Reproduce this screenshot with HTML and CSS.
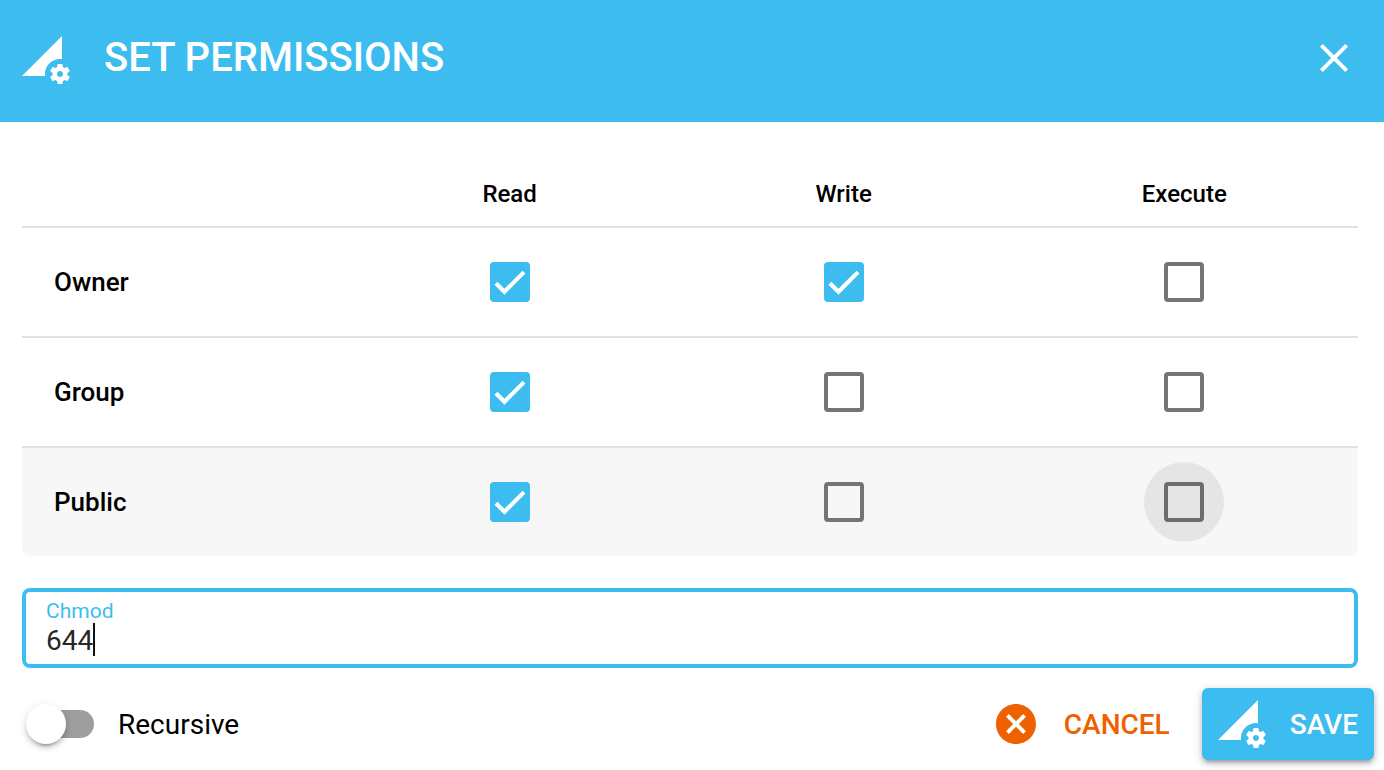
FILE: index.html
```
<!DOCTYPE html>
<html lang="en">
  <head>
    <meta charset="utf-8">
    <title>Set permissions</title>
    <meta name="viewport" content="width=device-width, initial-scale=1">
    <link rel="stylesheet" href="styles.css">
  </head>
  <body>
    <!-- Shared icon -->
    <svg class="sprite" aria-hidden="true">
      <symbol id="icon-permissions" viewBox="0 0 24 24">
        <path d="M18.99 11.5c.34 0 .67.03 1 .07L20 0 0 20h11.56c-.04-.33-.07-.66-.07-1 0-4.14 3.36-7.5 7.5-7.5zm3.71 7.99c.02-.16.04-.32.04-.49 0-.17-.01-.33-.04-.49l1.06-.83c.09-.08.12-.21.06-.32l-1-1.73c-.06-.11-.19-.15-.31-.11l-1.24.5c-.26-.2-.54-.37-.85-.49l-.19-1.32c-.01-.12-.12-.21-.24-.21h-2c-.12 0-.23.09-.25.21l-.19 1.32c-.3.13-.59.29-.85.49l-1.24-.5c-.11-.04-.24 0-.31.11l-1 1.73c-.06.11-.04.24.06.32l1.06.83c-.02.16-.03.32-.03.49 0 .17.01.33.03.49l-1.06.83c-.09.08-.12.21-.06.32l1 1.73c.06.11.19.15.31.11l1.24-.5c.26.2.54.37.85.49l.19 1.32c.02.12.12.21.25.21h2c.12 0 .23-.09.25-.21l.19-1.32c.3-.13.59-.29.84-.49l1.25.5c.11.04.24 0 .31-.11l1-1.73c.06-.11.03-.24-.06-.32l-1.07-.83zm-3.71 1.01c-.83 0-1.5-.67-1.5-1.5s.67-1.5 1.5-1.5 1.5.67 1.5 1.5-.67 1.5-1.5 1.5z"/>
      </symbol>
    </svg>

    <form class="dialog">
      <header class="dialog-header">
        <div class="dialog-title">
          <svg class="icon" aria-hidden="true"><use href="#icon-permissions"/></svg>
          <h1>Set permissions</h1>
        </div>
        <button type="button" class="close" aria-label="Close">
          <svg class="icon" viewBox="0 0 24 24" aria-hidden="true"><path d="M19 6.41L17.59 5 12 10.59 6.41 5 5 6.41 10.59 12 5 17.59 6.41 19 12 13.41 17.59 19 19 17.59 13.41 12z"/></svg>
        </button>
      </header>

      <div class="dialog-body">
        <table class="permissions">
          <colgroup>
            <col class="col-who">
            <col class="col-read">
            <col class="col-write">
            <col class="col-execute">
          </colgroup>
          <thead>
            <tr>
              <td></td>
              <th scope="col">Read</th>
              <th scope="col">Write</th>
              <th scope="col">Execute</th>
            </tr>
          </thead>
          <tbody>
            <tr>
              <th scope="row">Owner</th>
              <td><input type="checkbox" class="checkbox" aria-label="Owner read" checked></td>
              <td><input type="checkbox" class="checkbox" aria-label="Owner write" checked></td>
              <td><input type="checkbox" class="checkbox" aria-label="Owner execute"></td>
            </tr>
            <tr>
              <th scope="row">Group</th>
              <td><input type="checkbox" class="checkbox" aria-label="Group read" checked></td>
              <td><input type="checkbox" class="checkbox" aria-label="Group write"></td>
              <td><input type="checkbox" class="checkbox" aria-label="Group execute"></td>
            </tr>
            <tr class="active">
              <th scope="row">Public</th>
              <td><input type="checkbox" class="checkbox" aria-label="Public read" checked></td>
              <td><input type="checkbox" class="checkbox" aria-label="Public write"></td>
              <td><input type="checkbox" class="checkbox active" aria-label="Public execute"></td>
            </tr>
          </tbody>
        </table>

        <div class="field">
          <label for="chmod">Chmod</label>
          <input type="text" id="chmod" value="644">
          <span class="caret"></span>
        </div>
      </div>

      <footer class="dialog-actions">
        <label class="toggle">
          <input type="checkbox">
          <span>Recursive</span>
        </label>
        <div class="buttons">
          <button type="button" class="btn btn-cancel">
            <svg class="icon" viewBox="0 0 24 24" aria-hidden="true"><path d="M12 2C6.47 2 2 6.47 2 12s4.47 10 10 10 10-4.47 10-10S17.53 2 12 2zm5 13.59L15.59 17 12 13.41 8.41 17 7 15.59 10.59 12 7 8.41 8.41 7 12 10.59 15.59 7 17 8.41 13.41 12 17 15.59z"/></svg>
            <span>Cancel</span>
          </button>
          <button type="submit" class="btn btn-save">
            <svg class="icon" aria-hidden="true"><use href="#icon-permissions"/></svg>
            <span>Save</span>
          </button>
        </div>
      </footer>
    </form>
  </body>
</html>
```
FILE: styles.css
```
:root {
  --primary: #3dbdef;
  --cancel: #ef6000;
}
* {
  box-sizing: border-box;
}
body {
  margin: 0;
  background: #fff;
  color: #000;
  font-family: Roboto, sans-serif;
  font-size: 28px;
}
button,
input {
  margin: 0;
  font-family: inherit;
}
button {
  border: 0;
  padding: 0;
  background: none;
  cursor: pointer;
}
.sprite {
  position: absolute;
  width: 0;
  height: 0;
}
.icon {
  display: block;
  flex: none;
  width: 48px;
  height: 48px;
  fill: currentColor;
}

/* Header */
.dialog-header {
  display: flex;
  align-items: center;
  justify-content: space-between;
  padding: 32px 26px 38px 22px;
  background: var(--primary);
  color: #fff;
}
.dialog-title {
  display: flex;
  align-items: flex-end;
  gap: 34px;
}
.dialog-title h1 {
  margin: 0;
  font-size: 40px;
  font-weight: 500;
  line-height: 52px;
  text-transform: uppercase;
}
.close {
  color: inherit;
}

/* Permissions table */
.dialog-body {
  padding: 40px 26px 20px 22px;
}
.permissions {
  width: 100%;
  table-layout: fixed;
  border-collapse: separate;
  border-spacing: 0;
  text-align: center;
}
.col-who {
  width: 24%;
}
.col-read,
.col-write {
  width: 25%;
}
.col-execute {
  width: 26%;
}
.permissions th,
.permissions td {
  height: 110px;
  padding: 0 32px;
  border-bottom: 2px solid #e0e0e0;
  font-weight: 500;
}
.permissions thead th,
.permissions thead td {
  height: 66px;
  font-size: 24px;
}
.permissions tbody th {
  font-size: 26px;
  text-align: left;
}
.permissions tbody tr:last-child > * {
  height: 108px;
  border-bottom: 0;
}
.permissions tbody tr:last-child > :first-child {
  border-bottom-left-radius: 8px;
}
.permissions tbody tr:last-child > :last-child {
  border-bottom-right-radius: 8px;
}
.permissions tbody tr:hover > *,
.permissions tbody tr.active > * {
  background: #f7f7f7;
}

.checkbox {
  position: relative;
  display: block;
  width: 40px;
  height: 40px;
  margin: 0 auto;
  appearance: none;
  border: 4px solid #757575;
  border-radius: 4px;
}
.checkbox:checked {
  border-color: var(--primary);
  background: var(--primary);
}
.checkbox:checked::before {
  content: "";
  display: block;
  height: 100%;
  background: #fff;
  clip-path: polygon(11.8% 49.2%, 2.6% 58.4%, 33.8% 89.5%, 99.5% 23.7%, 90.4% 14.5%, 33.8% 71.2%);
}
/* Round halo over the box */
.checkbox:hover::after,
.checkbox.active::after {
  content: "";
  position: absolute;
  inset: -24px;
  border-radius: 50%;
  background: rgba(0, 0, 0, 0.07);
}

/* Chmod field */
.field {
  position: relative;
  display: flex;
  flex-direction: column;
  margin-top: 32px;
  padding: 6px 20px 8px;
  border: 4px solid var(--primary);
  border-radius: 8px;
}
.field label {
  color: var(--primary);
  font-size: 21px;
  line-height: 26px;
}
.field input {
  width: 100%;
  height: 32px;
  padding: 0;
  border: 0;
  outline: 0;
  background: none;
  color: rgba(0, 0, 0, 0.87);
  font-size: 28px;
}
.caret {
  position: absolute;
  bottom: 8px;
  left: 67px;
  width: 2px;
  height: 33px;
  background: #111;
}

/* Actions */
.dialog-actions {
  display: flex;
  align-items: center;
  justify-content: space-between;
  padding: 0 10px 10px 26px;
}
.toggle {
  display: flex;
  align-items: center;
  gap: 24px;
  cursor: pointer;
}
.toggle input {
  display: flex;
  align-items: center;
  width: 68px;
  height: 28px;
  appearance: none;
  border-radius: 14px;
  background: linear-gradient(to right, transparent 20px, #9e9e9e 20px);
}
.toggle input::before {
  content: "";
  flex: none;
  width: 40px;
  height: 40px;
  border-radius: 50%;
  background: #fff;
  box-shadow: 0 6px 2px -4px rgba(0, 0, 0, 0.2), 0 4px 4px rgba(0, 0, 0, 0.14), 0 2px 10px rgba(0, 0, 0, 0.12);
}
.toggle input:checked {
  background: var(--primary);
}
.toggle input:checked::before {
  margin-left: auto;
}
.buttons {
  display: flex;
  gap: 16px;
}
.btn {
  display: flex;
  align-items: center;
  gap: 24px;
  padding: 12px 16px;
  border-radius: 6px;
  font-size: 28px;
  font-weight: 500;
  text-transform: uppercase;
}
.btn-cancel {
  color: var(--cancel);
}
.btn-save {
  background: var(--primary);
  color: #fff;
  box-shadow: 0 2px 10px rgba(0, 0, 0, 0.2), 0 4px 4px rgba(0, 0, 0, 0.14), 0 6px 2px -4px rgba(0, 0, 0, 0.12);
}
```
